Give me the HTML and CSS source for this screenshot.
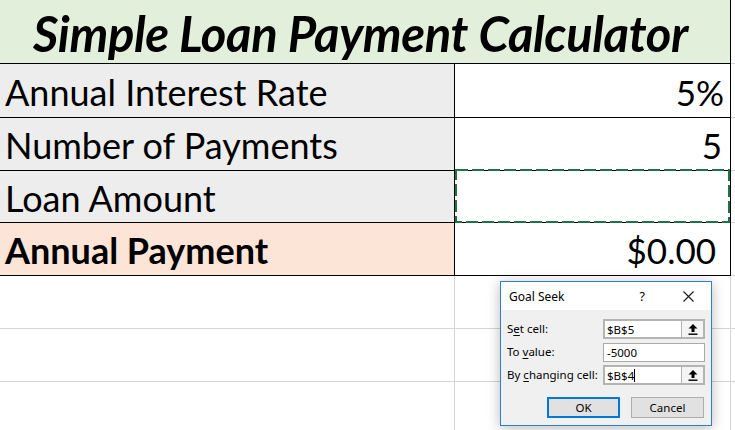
FILE: index.html
```html
<!DOCTYPE html>
<html>
<head>
<meta charset="utf-8">
<link rel="stylesheet" href="styles.css">
</head>
<body>
<div class="sheet">
  <div class="cell title">Simple Loan Payment Calculator</div>
  <div class="cell side"></div>

  <div class="cell label">Annual Interest Rate</div>
  <div class="cell value pad-a">5%</div>
  <div class="cell side"></div>

  <div class="cell label">Number of Payments</div>
  <div class="cell value pad-b">5</div>
  <div class="cell side"></div>

  <div class="cell label">Loan Amount</div>
  <div class="cell value selected">
    <svg class="ants" width="276" height="55" viewBox="0 0 276 55">
      <rect x="1" y="1" width="273" height="52" fill="none" stroke="#217346" stroke-width="2" stroke-dasharray="12 4"/>
    </svg>
  </div>
  <div class="cell side"></div>

  <div class="cell label result">Annual Payment</div>
  <div class="cell value pad-c">$0.00</div>
  <div class="cell side"></div>

  <div class="cell grid"></div>
  <div class="cell grid"></div>
  <div class="cell grid side"></div>

  <div class="cell grid"></div>
  <div class="cell grid"></div>
  <div class="cell grid side"></div>

  <div class="cell grid last"></div>
  <div class="cell grid last"></div>
  <div class="cell grid side last"></div>
</div>

<div class="dlg">
  <div class="dlg-title">
    <span class="dlg-name">Goal Seek</span>
    <span class="dlg-help">?</span>
    <svg class="dlg-close" width="11" height="11" viewBox="0 0 11 11">
      <path d="M0.5 0.5 L10.5 10.5 M10.5 0.5 L0.5 10.5" stroke="#1a1a1a" stroke-width="1.1" fill="none"/>
    </svg>
  </div>
  <div class="dlg-body">
    <div class="form">
      <span class="flabel">S<u>e</u>t cell:</span>
      <div class="ref">
        <span class="ref-text">$B$5</span>
        <span class="ref-btn"><svg width="10" height="11" viewBox="0 0 10 11"><path d="M5 0 L9.5 4.5 L6.5 4.5 L6.5 8 L3.5 8 L3.5 4.5 L0.5 4.5 Z" fill="#000"/><rect x="0.5" y="9.5" width="9" height="1.4" fill="#000"/></svg></span>
      </div>
      <span class="flabel">To <u>v</u>alue:</span>
      <div class="plain">-5000</div>
      <span class="flabel">By <u>c</u>hanging cell:</span>
      <div class="ref">
        <span class="ref-text">$B$4<span class="caret"></span></span>
        <span class="ref-btn"><svg width="10" height="11" viewBox="0 0 10 11"><path d="M5 0 L9.5 4.5 L6.5 4.5 L6.5 8 L3.5 8 L3.5 4.5 L0.5 4.5 Z" fill="#000"/><rect x="0.5" y="9.5" width="9" height="1.4" fill="#000"/></svg></span>
      </div>
    </div>
    <div class="buttons">
      <span class="btn default">OK</span>
      <span class="btn">Cancel</span>
    </div>
  </div>
</div>
</body>
</html>
```

FILE: styles.css
```css
* { box-sizing: border-box; }
html, body { margin: 0; padding: 0; }
body {
  width: 735px;
  height: 430px;
  overflow: hidden;
  background: #fff;
  position: relative;
  font-family: Lato, "Open Sans", sans-serif;
  color: #000;
}
.sheet {
  display: grid;
  grid-template-columns: 455px 276px 4px;
  grid-template-rows: 64px 54px 53px 52px 53px 53px 53px 48px;
}
.cell {
  border-right: 1px solid #000;
  border-bottom: 1px solid #000;
  display: flex;
  align-items: center;
  white-space: nowrap;
}
.title {
  grid-column: 1 / 3;
  background: #e2efda;
  justify-content: center;
  font-weight: 700;
  font-style: italic;
  font-size: 49px;
  letter-spacing: -0.4px;
  padding-right: 9px;
  padding-top: 3px;
}
.side {
  border-right: none;
  border-bottom: 1px solid #d4d4d4;
}
.label {
  background: #ededed;
  font-size: 36px;
  padding-left: 5px;
  padding-top: 2px;
}
.label.result {
  background: #fce4d6;
  font-weight: 700;
}
.value {
  background: #fff;
  justify-content: flex-end;
  font-size: 35px;
  padding-top: 2px;
}
.pad-a { padding-right: 6px; }
.pad-b { padding-right: 8px; }
.pad-c { padding-right: 14px; }
.selected { position: relative; }
.ants {
  position: absolute;
  left: 0;
  top: -2px;
}
.grid {
  border-right: 1px solid #d4d4d4;
  border-bottom: 1px solid #d4d4d4;
}
.grid.side { border-right: none; }
.grid.last { border-bottom: none; }

/* dialog */
.dlg {
  position: absolute;
  left: 500px;
  top: 281px;
  width: 212px;
  height: 145px;
  border: 1px solid #2f7fd3;
  background: #f0f0f0;
  box-shadow: 0 2px 12px rgba(0, 0, 0, 0.28);
  font-family: "Noto Sans", "Open Sans", sans-serif;
  font-size: 11.5px;
  color: #000;
  display: flex;
  flex-direction: column;
}
.dlg-title {
  height: 28px;
  background: #fff;
  display: flex;
  align-items: center;
  padding-left: 8px;
  padding-top: 1px;
}
.dlg-name { font-size: 12px; flex: 1; }
.dlg-help { font-size: 12.5px; margin-right: 38px; }
.dlg-close { margin-right: 17px; }
.dlg-body {
  flex: 1;
  padding: 9px 6px 0 6px;
  display: flex;
  flex-direction: column;
}
.form {
  display: grid;
  grid-template-columns: 96px 102px;
  grid-auto-rows: 20px;
  row-gap: 3px;
  align-items: center;
}
.flabel { line-height: 20px; }
.flabel u { text-decoration-thickness: 1px; text-underline-offset: 2px; }
.ref {
  height: 20px;
  border: 2px solid #b4b4b4;
  background: #fff;
  display: flex;
}
.ref-text {
  flex: 1;
  padding-left: 2px;
  display: flex;
  align-items: center;
}
.caret {
  display: inline-block;
  width: 1px;
  height: 13px;
  background: #000;
}
.ref-btn {
  width: 22px;
  border-left: 1px solid #b4b4b4;
  background: #f4f4f4;
  display: flex;
  align-items: center;
  justify-content: center;
}
.plain {
  height: 19px;
  border: 1px solid #a9a9a9;
  background: #fff;
  padding-left: 3px;
  display: flex;
  align-items: center;
}
.buttons {
  display: flex;
  justify-content: flex-end;
  gap: 11px;
  margin-top: 12px;
  padding-right: 1px;
}
.btn {
  width: 73px;
  height: 21px;
  border: 1px solid #adadad;
  background: #e1e1e1;
  display: flex;
  align-items: center;
  justify-content: center;
}
.btn.default {
  border: 2px solid #0078d7;
}
```
